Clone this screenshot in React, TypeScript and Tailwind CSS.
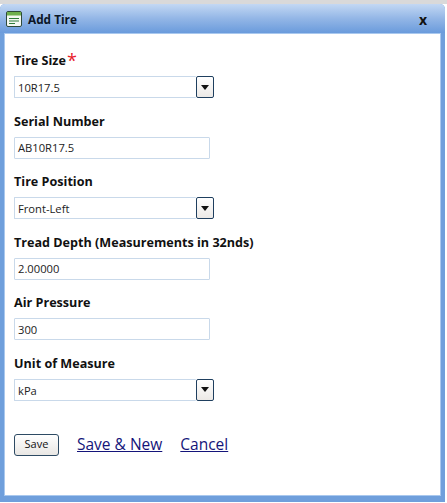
import { Fragment } from 'react'

const FIELDS = [
  { label: 'Tire Size', value: '10R17.5', select: true, required: true },
  { label: 'Serial Number', value: 'AB10R17.5' },
  { label: 'Tire Position', value: 'Front-Left', select: true },
  { label: 'Tread Depth (Measurements in 32nds)', value: '2.00000' },
  { label: 'Air Pressure', value: '300' },
  { label: 'Unit of Measure', value: 'kPa', select: true },
]

function WindowIcon() {
  return (
    <svg width="17" height="17" viewBox="0 0 17 17" className="shrink-0">
      <rect x="0.5" y="0.5" width="15" height="15" rx="1.5" fill="#f4f8f2" stroke="#2f4a3a" />
      <rect x="1" y="1" width="14" height="3.5" fill="#6fb04e" />
      <path d="M3 7.5h10M3 10h10M3 12.5h6" stroke="#2e7d3a" strokeWidth="1.1" />
    </svg>
  )
}

function Field({ label, value, select, required }: { label: string; value: string; select?: boolean; required?: boolean }) {
  return (
    <Fragment>
      <div className="flex h-[22px] items-center pt-[1px] text-[12.6px] font-bold text-[#111]">
        {label}
        {required && <span className="mb-1 ml-px text-[18px] leading-none font-normal text-[#e8202a]">*</span>}
      </div>
      <div className={`mt-1 flex h-[22px] items-center ${select ? 'w-[200px]' : 'w-[196px]'}`}>
        <div className={`flex h-full min-w-0 flex-1 items-center rounded-[1px] border border-[#c9d9ea] pt-[2px] pl-[3px] text-[11.2px] text-[#222] ${select ? 'border-r-0' : ''}`}>
          {value}
        </div>
        {select && (
          <div className="flex h-full w-[18px] items-center justify-center rounded-[2px] border border-[#1f3f5f] bg-gradient-to-b from-white to-[#ece9e6]">
            <svg width="8" height="5" viewBox="0 0 8 5">
              <path d="M0 0h8L4 5z" fill="#111" />
            </svg>
          </div>
        )}
      </div>
    </Fragment>
  )
}

export default function App() {
  return (
    <div className="h-[503px] w-[447px] overflow-hidden bg-white font-['Open_Sans','Noto_Sans',sans-serif]">
      <div className="h-[4px] bg-[#d9d9d9]" />
      <div className="flex h-[498px] w-[445px] flex-col rounded-t-[5px] bg-[#6f9fdc]">
        <div className="flex h-[29px] items-center rounded-t-[5px] bg-gradient-to-b from-[#c3d8f3] via-[#93b6e6] to-[#6a9bdc] pt-[2px] pr-[18px] pl-[6px]">
          <WindowIcon />
          <span className="ml-[5px] text-[11.8px] font-bold text-[#0c1626]">Add Tire</span>
          <span className="ml-auto text-[14px] leading-none font-bold text-[#111]">x</span>
        </div>
        <div className="mx-[4px] mb-[6px] flex-1 border border-[#a9c8ee] bg-white pt-[16px] pl-[9px]">
          <div className="flex flex-col gap-[12.6px]">
            {FIELDS.map((f) => (
              <div key={f.label}>
                <Field {...f} />
              </div>
            ))}
          </div>
          <div className="mt-[32px] flex items-center">
            <button className="flex h-[22px] w-[45px] items-center justify-center rounded-[3px] border border-[#2d4a63] bg-gradient-to-b from-white to-[#e9e7e4] text-[11px] text-[#111]">
              Save
            </button>
            <a className="ml-[18px] text-[15.5px] text-[#14147a] underline">Save &amp; New</a>
            <a className="ml-[18px] text-[15.5px] text-[#14147a] underline">Cancel</a>
          </div>
        </div>
      </div>
    </div>
  )
}
